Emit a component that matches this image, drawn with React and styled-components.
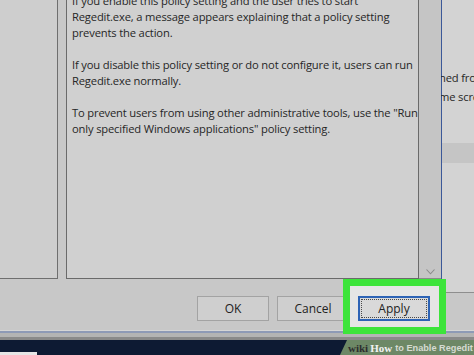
import React from "react";
import styled, { createGlobalStyle } from "styled-components";

const Global = createGlobalStyle`
  html, body { margin: 0; padding: 0; background: #c9c9c9; }
  body { width: 474px; height: 355px; overflow: hidden; font-family: "Open Sans", "Noto Sans", sans-serif; }
`;

const Page = styled.div`
  position: relative;
  width: 474px;
  height: 355px;
  overflow: hidden;
  display: flex;
  flex-direction: column;
  background: #c9c9c9;
`;

const Main = styled.div`
  display: flex;
  height: 330px;
  flex-shrink: 0;
`;

const Dialog = styled.div`
  width: 441px;
  flex-shrink: 0;
  display: flex;
  flex-direction: column;
  background: #c8c8c8;
`;

const ContentRow = styled.div`
  height: 279px;
  flex-shrink: 0;
  display: flex;
  gap: 8px;
`;

const SidePanel = styled.div`
  width: 58px;
  box-sizing: border-box;
  background: #cecece;
  border-right: 1px solid #6f6f6f;
  border-bottom: 1px solid #6f6f6f;
`;

const TextBox = styled.div`
  width: 353px;
  flex-shrink: 0;
  box-sizing: border-box;
  background: #d0d0d0;
  border-left: 1px solid #6a6a6a;
  border-right: 1px solid #6a6a6a;
  border-bottom: 1px solid #6a6a6a;
  padding-left: 5px;
  overflow: hidden;
`;

const Body = styled.div`
  margin-top: -7px;
  display: flex;
  flex-direction: column;
  gap: 16px;
`;

const Para = styled.div`
  display: flex;
  flex-direction: column;
`;

const Line = styled.span`
  display: block;
  white-space: nowrap;
  font-size: 11.2px;
  letter-spacing: -0.16px;
  line-height: 16px;
  color: #262626;
`;

const ScrollCol = styled.div`
  width: 22px;
  flex-shrink: 0;
  box-sizing: border-box;
  background: #c5c5c5;
  border-bottom: 1px solid #8a8a8a;
  display: flex;
  flex-direction: column;
  justify-content: flex-end;
  align-items: center;
  padding-bottom: 3px;
  margin-left: -8px;
`;

const ButtonBar = styled.div`
  flex: 1;
  min-height: 0;
  display: flex;
  align-items: flex-start;
  padding: 17px 0 0 197px;
  gap: 8px;
`;

const Button = styled.div`
  width: 72px;
  height: 25px;
  flex-shrink: 0;
  box-sizing: border-box;
  display: flex;
  align-items: center;
  justify-content: center;
  background: ${(p) => (p.$primary ? "#d9d9d9" : "#cfcfcf")};
  border: ${(p) => (p.$primary ? "2px solid #2d63b5" : "1px solid #a3a3a3")};
  font-size: 12px;
  color: #222;
  position: relative;
`;

const FocusRing = styled.div`
  position: absolute;
  inset: 1px;
  border: 1px dotted #4a4a4a;
`;

const Highlight = styled.div`
  position: relative;
  z-index: 3;
  flex-shrink: 0;
  margin: -17px 0 -4px -14px;
  width: 103px;
  height: 55px;
  box-sizing: border-box;
  border: 7px solid #3de43b;
  background: #e5e5e5;
  padding: 10px 0 0 8px;
`;

const RightWindow = styled.div`
  flex: 1;
  display: flex;
  flex-direction: column;
  overflow: hidden;
`;

const RightPane = styled.div`
  height: 293px;
  flex-shrink: 0;
  box-sizing: border-box;
  background: #d3d3d3;
  border-left: 1px solid #3b5898;
  border-bottom: 1px solid #8e8e8e;
  padding-top: 68px;
  display: flex;
  flex-direction: column;
`;

const RightLine = styled.span`
  display: block;
  white-space: nowrap;
  font-size: 11.2px;
  letter-spacing: -0.16px;
  line-height: 19px;
  color: #262626;
  margin-left: -3px;
`;

const Band = styled.div`
  margin-top: 37px;
  height: 20px;
  background: #c5c5c5;
`;

const RightLower = styled.div`
  flex: 1;
  background: #c8c8c8;
`;

const Strip = styled.div`
  height: ${(p) => p.$h}px;
  background: ${(p) => p.$c};
  flex-shrink: 0;
`;

const Taskbar = styled.div`
  flex: 1;
  background: #0d1a33;
  display: flex;
  align-items: flex-end;
`;

const TaskItem = styled.div`
  width: 37px;
  height: 3px;
  background: #e6e6e6;
`;

const Watermark = styled.div`
  position: absolute;
  right: 0;
  bottom: 0;
  z-index: 4;
  width: 134px;
  height: 15px;
  background: #6d8866;
  clip-path: polygon(7px 0, 100% 0, 100% 100%, 0 100%);
  display: flex;
  align-items: center;
  padding-left: 8px;
  box-sizing: border-box;
  white-space: nowrap;
  gap: 2px;
`;

const Wiki = styled.span`
  font-family: "Liberation Serif", "DejaVu Serif", serif;
  font-weight: bold;
  font-size: 11px;
  color: ${(p) => p.$c};
`;

const WmText = styled.span`
  font-family: "Liberation Sans", Arial, sans-serif;
  font-weight: bold;
  font-size: 9.2px;
  color: #d6dbd2;
  margin-left: 1px;
`;

const Chevron = () => (
  <svg width="9" height="6" viewBox="0 0 9 6">
    <path d="M0.5 0.5 L4.5 4.8 L8.5 0.5" fill="none" stroke="#8a8a8a" strokeWidth="1.1" />
  </svg>
);

export default function App() {
  return (
    <>
      <Global />
      <Page>
        <Main>
          <Dialog>
            <ContentRow>
              <SidePanel />
              <TextBox>
                <Body>
                  <Para>
                    <Line>If you enable this policy setting and the user tries to start</Line>
                    <Line>Regedit.exe, a message appears explaining that a policy setting</Line>
                    <Line>prevents the action.</Line>
                  </Para>
                  <Para>
                    <Line>If you disable this policy setting or do not configure it, users can run</Line>
                    <Line>Regedit.exe normally.</Line>
                  </Para>
                  <Para>
                    <Line>To prevent users from using other administrative tools, use the "Run</Line>
                    <Line>only specified Windows applications" policy setting.</Line>
                  </Para>
                </Body>
              </TextBox>
              <ScrollCol>
                <Chevron />
              </ScrollCol>
            </ContentRow>
            <ButtonBar>
              <Button>OK</Button>
              <Button>Cancel</Button>
              <Highlight>
                <Button $primary>
                  <FocusRing />
                  Apply
                </Button>
              </Highlight>
            </ButtonBar>
          </Dialog>
          <RightWindow>
            <RightPane>
              <RightLine>hed from</RightLine>
              <RightLine>me screen</RightLine>
              <Band />
            </RightPane>
            <RightLower />
          </RightWindow>
        </Main>
        <Strip $h={1} $c="#d6d6d6" />
        <Strip $h={2} $c="#8e9ab6" />
        <Strip $h={4} $c="#b4b4b4" />
        <Strip $h={3} $c="#8a8a8a" />
        <Taskbar>
          <TaskItem />
        </Taskbar>
        <Watermark>
          <Wiki $c="#2e2e2e">wiki</Wiki>
          <Wiki $c="#f2f2f2">How</Wiki>
          <WmText>to Enable Regedit</WmText>
        </Watermark>
      </Page>
    </>
  );
}
